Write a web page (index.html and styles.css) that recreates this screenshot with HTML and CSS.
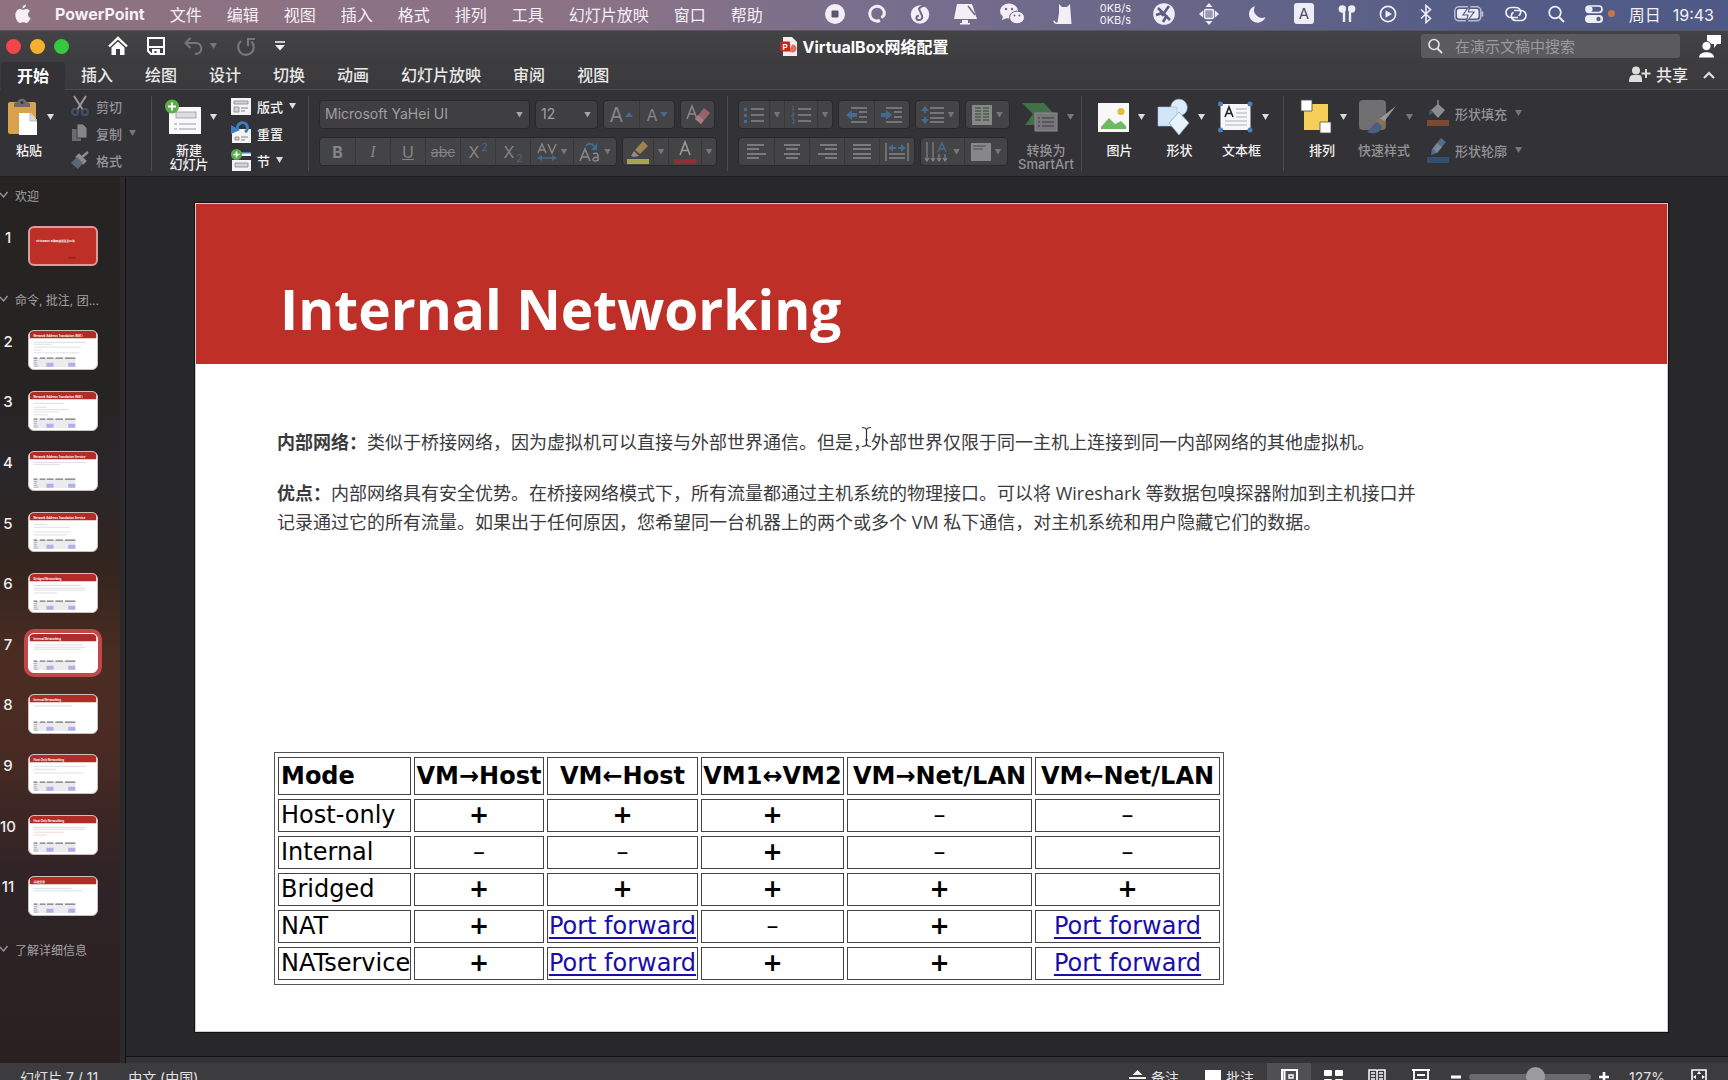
FILE: index.html
```html
<!DOCTYPE html>
<html lang="zh-CN">
<head>
<meta charset="utf-8">
<title>VirtualBox网络配置</title>
<link rel="stylesheet" href="styles.css">
</head>
<body>
<svg class="defs" width="0" height="0" aria-hidden="true">
  <symbol id="mini-grid" viewBox="0 0 70 40">
    <path d="M4 28.500h44v9.500H4z" fill="#ecebee"/>
    <path d="M4 28.500h4M10.500 28.500h6M18 28.500h7M27 28.500h8M37 28.500H48" stroke="#77757a" stroke-width="1.200"/>
    <path d="M4 31h4M4 33h3.500M4 35h4M4 37h5" stroke="#a5a3a8" stroke-width=".8"/>
    <path d="M17.500 33.500h7.500v4h-7.500zM40.500 33.500H48v4h-7.500z" fill="#b4aeea"/>
  </symbol>
</svg>

<header class="menubar">
  <nav class="menus" aria-label="菜单栏">
    <button aria-label="Apple"><svg width="16" height="20" viewBox="0 0 16 20"><path fill="#f6eef2" d="M11 .5c.1 2-1.700 3.900-3.600 3.900C7.200 2.500 9 .700 11 .5zM11.300 5c1.500 0 2.900.8 3.700 2-3 1.800-2.500 5.900.6 7.100-.9 2.400-2.400 4.900-4.200 4.900-1.200 0-1.700-.7-3.200-.7s-2 .7-3.200.7C2.900 19 .4 14.900.4 11.200.4 7.400 2.600 5 5 5c1.400 0 2.400.8 3.300.8C9.100 5.800 10 5 11.300 5z"/></svg></button>
    <button class="app">PowerPoint</button>
    <button>文件</button><button>编辑</button><button>视图</button><button>插入</button><button>格式</button><button>排列</button><button>工具</button><button>幻灯片放映</button><button>窗口</button><button>帮助</button>
  </nav>
  <div class="tray">
    <svg width="22" height="20" viewBox="0 0 20 20"><circle cx="10" cy="10" r="10" fill="#f4eff7"/><rect x="6.500" y="6.500" width="7" height="7" rx="1" fill="#5d5570"/></svg>
    <svg width="22" height="20" viewBox="0 0 18 20"><path d="M12 16.500A7.400 7.400 0 1 1 16.300 8c.5 3-1 4.500-3 5.500" fill="none" stroke="#f4eff7" stroke-width="3"/></svg>
    <svg width="24" height="20" viewBox="0 0 18 20"><circle cx="9" cy="10.500" r="9.200" fill="#f4eff7"/><path d="M14 1.500c-3 1-5.500 1-6 3.500l3 6.500c1 3-1.500 5-3.500 4.500-3-.5-2.800-4 .5-4.500" fill="none" stroke="#716886" stroke-width="2"/></svg>
    <svg width="26" height="22" viewBox="0 0 24 22"><path d="M4 1h15l5 15H1z" fill="#f4eff7"/><path d="M15 3l7 9" stroke="#6b6585" stroke-width="1.500"/><path d="M9 17h6v3h2v1.500H7V20h2z" fill="#f4eff7"/></svg>
    <svg width="28" height="22" viewBox="0 0 24 22"><ellipse cx="9" cy="8" rx="9" ry="7.500" fill="#f4eff7"/><path d="M3 13l-1 4 5-2z" fill="#f4eff7"/><ellipse cx="17" cy="14.500" rx="7.500" ry="6.300" fill="#f4eff7" stroke="#6b6585"/><g fill="#6b6585"><circle cx="6" cy="6" r="1.200"/><circle cx="12" cy="6" r="1.200"/><circle cx="14.500" cy="12.500" r="1"/><circle cx="19.500" cy="12.500" r="1"/></g></svg>
    <svg width="34" height="22" viewBox="0 0 20 22"><path d="M6 1l3 3h5l3-3 1.500 20H5c-3 0-5-1-4.500-3.500l1.500.5c0 1 1 1.500 2.500 1.500L6 10z" fill="#f4eff7"/></svg>
    <span class="net">0KB/s<br>0KB/s</span>
    <svg width="24" height="22" viewBox="0 0 22 22"><circle cx="11" cy="11" r="10.800" fill="#eeedf6"/><path d="M5 5l12 12M16 3L9 13M3 12l6-2M10 19l4-7" stroke="#5d5c80" stroke-width="2.600" fill="none"/></svg>
    <svg width="26" height="22" viewBox="0 0 20 22"><rect x="5.500" y="6.500" width="9" height="9" rx="1.500" fill="#9a98b8" stroke="#eeedf6" stroke-width="1.500"/><path d="M10 0l3.500 4h-7zM10 22l3.500-4h-7zM0 11l4-3.500v7zM20 11l-4-3.500v7z" fill="#eeedf6"/></svg>
    <svg width="30" height="20" viewBox="0 0 22 20"><path d="M9 2a8 8 0 0 0 10.500 11A8.500 8.500 0 1 1 9 2z" fill="#eeedf6"/></svg>
    <svg width="24" height="21" viewBox="0 0 20 21"><rect width="20" height="21" rx="3" fill="#eeedf6"/><text x="10" y="16" text-anchor="middle" class="keycap">A</text></svg>
    <svg width="22" height="20" viewBox="0 0 18 20"><path d="M6 2v16M12 2v16" stroke="#eeedf6" stroke-width="2.400"/><circle cx="4.300" cy="5" r="3.700" fill="#eeedf6"/><circle cx="13.700" cy="5" r="3.700" fill="#eeedf6"/></svg>
    <svg width="20" height="18" viewBox="0 0 18 18"><circle cx="9" cy="9" r="7.600" fill="none" stroke="#eeedf6" stroke-width="1.700"/><path d="M6.500 5.200L13 9l-6.500 3.800z" fill="#eeedf6"/></svg>
    <svg width="16" height="20" viewBox="0 0 12 20"><path d="M1 5.500l9.500 9L6 18.500v-17l4.500 4L1 14.500" fill="none" stroke="#eeedf6" stroke-width="1.600"/></svg>
    <svg width="30" height="18" viewBox="0 0 30 18"><rect x=".8" y="1.800" width="26" height="14" rx="4" fill="none" stroke="#b9bbd3" stroke-width="1.500"/><rect x="3" y="4" width="21.500" height="9.600" rx="2" fill="#eeedf6"/><path d="M28.300 6.500v5" stroke="#b9bbd3" stroke-width="2"/><path d="M16 0l-7 10h5l-2 8 8-11h-5.500z" fill="#eeedf6" stroke="#565d88" stroke-width="1.200"/></svg>
    <svg width="24" height="18" viewBox="0 0 22 18"><path d="M13 12.500H6a5 5 0 0 1 0-10h5.500a4.500 4.500 0 0 1 2 8.300M9 5.500h7a5 5 0 0 1 0 10h-5.500a4.500 4.500 0 0 1-2-8.300" fill="none" stroke="#eeedf6" stroke-width="1.700"/></svg>
    <svg width="17" height="18" viewBox="0 0 17 18"><circle cx="7" cy="7.500" r="5.800" fill="none" stroke="#eeedf6" stroke-width="1.800"/><path d="M11 12l5 5" stroke="#eeedf6" stroke-width="2"/></svg>
    <span class="cc"><svg width="18" height="18" viewBox="0 0 18 18"><rect x="1" y="1" width="16" height="6.500" rx="3.200" fill="none" stroke="#eeedf6" stroke-width="1.700"/><circle cx="4.500" cy="4.200" r="3" fill="#eeedf6"/><rect y="10" width="18" height="8" rx="4" fill="#eeedf6"/><circle cx="13.500" cy="14" r="2.200" fill="#565d88"/></svg><i class="rec"></i></span>
    <span class="clock"><span>周日</span><span>19:43</span></span>
  </div>
</header>

<header class="titlebar">
  <div class="quick">
    <span class="lights"><button class="close" aria-label="关闭"></button><button class="min" aria-label="最小化"></button><button class="max" aria-label="缩放"></button></span>
    <button aria-label="主页"><svg width="20" height="20" viewBox="0 0 20 20"><path d="M1 10.500L10 2l9 8.500" fill="none" stroke="#fff" stroke-width="2.400"/><path d="M3.500 11.500L10 5.500l6.500 6V19H12v-6H8v6H3.500z" fill="#fff"/></svg></button>
    <button aria-label="保存"><svg width="18" height="18" viewBox="0 0 18 18"><path d="M1 1h16v16H4l-3-3z" fill="none" stroke="#fff" stroke-width="2"/><path d="M2 9h14v2H2zM5 12h8v5H9.500v-3h-2v3H5z" fill="#fff"/></svg></button>
    <button class="undo" aria-label="撤销"><svg width="19" height="18" viewBox="0 0 19 18"><path d="M6.500 1L1.500 6l5 5M2 6h10a5.500 5.500 0 0 1 2 10.500l-3 .5" fill="none" stroke="#77777a" stroke-width="2"/></svg><i class="caret dim"></i></button>
    <button aria-label="重复"><svg width="20" height="19" viewBox="0 0 20 19"><path d="M5 4a7.800 7.800 0 1 0 10.500.5M12 9V2M11 2h8" fill="none" stroke="#77777a" stroke-width="2.200"/></svg></button>
    <button aria-label="自定义"><svg width="10" height="10" viewBox="0 0 10 10"><path d="M0 1h10" stroke="#eee" stroke-width="1.600"/><path d="M0 4h10L5 9.500z" fill="#eee"/></svg></button>
  </div>
  <h1 class="doc"><svg width="17" height="19" viewBox="0 0 17 19"><path d="M3 0h9l5 5v14H3z" fill="#f3efee"/><path d="M12 7.500a4 4 0 1 1-3 6z" fill="#e0705c"/><rect y="4.500" width="10" height="10" rx="1" fill="#c5261b"/><text x="5" y="12.500" text-anchor="middle" class="ppt">P</text></svg>VirtualBox网络配置</h1>
  <div class="right">
    <label class="search"><svg width="15" height="16" viewBox="0 0 15 16"><circle cx="6" cy="6.500" r="5" fill="none" stroke="#e6e6e6" stroke-width="1.600"/><path d="M9.500 10.500l4.500 4.500" stroke="#e6e6e6" stroke-width="1.800"/></svg><input type="search" placeholder="在演示文稿中搜索" aria-label="在演示文稿中搜索"></label>
    <button aria-label="反馈"><svg width="22" height="23" viewBox="0 0 22 23"><path d="M8 0h14v9h-4l-3 4V9H8z" fill="#fff"/><circle cx="7.500" cy="11" r="4.600" fill="#fff" stroke="#404042"/><path d="M0 22.500c0-7 15-7 15 0z" fill="#fff"/></svg></button>
  </div>
</header>

<nav class="tabs" aria-label="功能区">
  <button class="on">开始</button><button>插入</button><button>绘图</button><button>设计</button><button>切换</button><button>动画</button><button>幻灯片放映</button><button>审阅</button><button>视图</button>
  <button class="share"><svg width="22" height="16" viewBox="0 0 22 16"><circle cx="7" cy="4.500" r="4" fill="#ddd"/><path d="M0 16c0-4 1-7 4-7h6c3 0 3 3 3 7z" fill="#ddd"/><path d="M17 3v9M12.500 7.500h9" stroke="#ddd" stroke-width="2"/></svg>共享</button>
  <button class="fold" aria-label="折叠功能区"><svg width="12" height="8" viewBox="0 0 12 8"><path d="M1 7l5-5 5 5" fill="none" stroke="#e0e0e0" stroke-width="2.200"/></svg></button>
</nav>

<section class="ribbon" aria-label="开始">
  <div class="group clip">
    <button class="big"><span class="pic"><svg width="30" height="36" viewBox="0 0 30 36"><rect y="3" width="28" height="32" rx="2" fill="#d9a24c"/><path d="M6 8V5c0-2 3-1 4-3 1-3 7-3 8 0 1 2 4 1 4 3v3z" fill="#6d6a68"/><circle cx="14" cy="3.500" r="1.500" fill="#333"/><path d="M11 14h12l6 7v15H11z" fill="#fff"/><path d="M22 14v8h7z" fill="#ddd" stroke="#999" stroke-width=".6"/></svg><i class="caret"></i></span>粘贴</button>
    <div class="stack dimmed">
      <button><svg width="18" height="20" viewBox="0 0 18 20"><path d="M3 0l9 14M15 0L6 14" stroke="#98989b" stroke-width="2"/><circle cx="4" cy="16" r="3" fill="none" stroke="#43536d" stroke-width="1.800"/><circle cx="14" cy="16" r="3" fill="none" stroke="#43536d" stroke-width="1.800"/></svg>剪切</button>
      <button><svg width="18" height="18" viewBox="0 0 18 18"><path d="M1 5h9v12H1z" fill="#6c6c6f"/><path d="M6 0h6l4 4v10H6z" fill="#858588" stroke="#333236" stroke-width=".8"/></svg>复制<i class="caret dim"></i></button>
      <button><svg width="18" height="18" viewBox="0 0 18 18"><path d="M17 1l-6 5M8 4l6 6-2 2-6-6z" stroke="#8d8d90" stroke-width="2.500" fill="#8d8d90"/><path d="M6 6l6 6-5 6-7-6z" fill="#5e6774"/></svg>格式</button>
    </div>
  </div>
  <div class="group slides">
    <button class="big"><span class="pic"><svg width="36" height="36" viewBox="0 0 36 36"><rect x="4" y="8" width="32" height="27" fill="#fafafa"/><rect x="11" y="13" width="20" height="6" fill="#dcdde2" stroke="#9a9ca4" stroke-width=".8"/><path d="M9 25h3M14 25h17M9 30h3M14 30h17" stroke="#9a9ca4" stroke-width="1.200"/><circle cx="7" cy="7.500" r="7" fill="#5cae4d"/><path d="M7 3.500v8M3 7.500h8" stroke="#fff" stroke-width="2"/></svg><i class="caret"></i></span>新建<br>幻灯片</button>
    <div class="stack">
      <button><svg width="20" height="17" viewBox="0 0 20 17"><path d="M0 0h20v17H0z" fill="#f4f4f4"/><path d="M3 3h14v3H3zM3 9h5v5H3z" fill="#d0d2d8" stroke="#888" stroke-width=".8"/><path d="M10 10h7M10 13h4" stroke="#888"/></svg>版式<i class="caret"></i></button>
      <button><svg width="20" height="20" viewBox="0 0 20 20"><path d="M1 6h19v14H1z" fill="#f4f4f4"/><path d="M4 14h4v3H4z" fill="#d0d2d8" stroke="#888" stroke-width=".8"/><path d="M10 14h7M10 17h4" stroke="#888"/><path d="M7 7a5 5 0 1 1 7 2" fill="none" stroke="#3e7cc4" stroke-width="3"/><path d="M0 2l9 5-9 4z" fill="#3e7cc4"/></svg>重置</button>
      <button><svg width="20" height="22" viewBox="0 0 20 22"><path d="M9 3h11v4H9z" fill="#f4f4f4"/><path d="M9 3h11v1.500H9z" fill="#3e7cc4"/><path d="M1 11h19v11H1z" fill="#f4f4f4"/><path d="M4 14h13v4H4z" fill="#d0d2d8" stroke="#888" stroke-width=".8"/><circle cx="5.500" cy="5.500" r="5.500" fill="#5cae4d"/><path d="M5.500 2.500v6M2.500 5.500h6" stroke="#fff" stroke-width="1.500"/></svg>节<i class="caret"></i></button>
    </div>
  </div>
  <div class="group fonts">
    <div class="line">
      <label class="combo face"><select aria-label="字体"><option>Microsoft YaHei UI</option></select><i class="caret"></i></label>
      <label class="combo size"><select aria-label="字号"><option>12</option></select><i class="caret"></i></label>
      <div class="bar"><button class="w35 t20">A<svg width="8" height="5" viewBox="0 0 8 5"><path d="M0 5h8L4 0z" fill="#456a92"/></svg></button><button class="w35 t16">A<svg width="8" height="5" viewBox="0 0 8 5"><path d="M0 0h8L4 5z" fill="#456a92"/></svg></button></div>
      <div class="bar"><button class="w33" aria-label="清除格式"><svg width="24" height="24" viewBox="0 0 24 24"><path d="M1 16L6 3l5 13M3 11h6" fill="none" stroke="#89898b" stroke-width="1.500"/><path d="M9 16l9-11 6 5-9 11z" fill="#96626c"/><path d="M9 16l3-4 6 5-3 4z" fill="#a97a83"/></svg></button></div>
    </div>
    <div class="line">
      <div class="bar">
        <button class="w35 t16 bold">B</button><button class="w35 t16 ital">I</button><button class="w35 t16 under">U</button><button class="w35 t14 strike">abc</button><button class="w35 t16">X<sup>2</sup></button><button class="w35 t16">X<sub>2</sub></button>
        <button class="w43" aria-label="字符间距"><svg width="20" height="18" viewBox="0 0 20 18"><path d="M1 10L5 1l4 9M2.500 7h5M11 1l4 9 4-9" fill="none" stroke="#89898b" stroke-width="1.400"/><path d="M3 15h14" stroke="#456a92" stroke-width="1.500"/><path d="M0 15l5-3v6zM20 15l-5-3v6z" fill="#456a92"/></svg><i class="caret dim"></i></button>
        <button class="w43" aria-label="更改大小写"><svg width="21" height="22" viewBox="0 0 21 22"><path d="M1 20L6 8l5 12M3 16h6" fill="none" stroke="#89898b" stroke-width="1.500"/><path d="M14 13c2-1.500 5-1 5 1.500V20M19 16c-6 0-6 4-3 4 2 0 3-1 3-2" fill="none" stroke="#89898b" stroke-width="1.500"/><path d="M7 5c2-3 6-3 8 0" fill="none" stroke="#456a92" stroke-width="2"/><path d="M18 2v7h-6z" fill="#456a92"/></svg><i class="caret dim"></i></button>
      </div>
      <div class="bar">
        <button class="w30" aria-label="突出显示"><svg width="22" height="24" viewBox="0 0 22 24"><path d="M8 10l8-9 5 5-8 8z" fill="#a08355"/><path d="M7 11l5 5-5 1-3-1z" fill="#8d8d8f"/><rect y="19" width="22" height="5" fill="#a3a64e"/></svg></button><button class="w15"><i class="caret dim"></i></button>
        <button class="w33" aria-label="字体颜色"><svg width="22" height="24" viewBox="0 0 22 24"><path d="M6 15l5-13 5 13M8 10.500h6" fill="none" stroke="#99999b" stroke-width="1.600"/><rect y="19" width="22" height="5" fill="#8d2f35"/></svg></button><button class="w15"><i class="caret dim"></i></button>
      </div>
    </div>
  </div>
  <div class="group para">
    <div class="lines">
      <div class="line">
        <div class="bar">
          <button class="w30" aria-label="项目符号"><svg width="20" height="18" viewBox="0 0 20 18"><path d="M7 3h13M7 9h13M7 15h13" stroke="#858587" stroke-width="1.300"/><path d="M0 2h3v3H0zM0 8h3v3H0zM0 14h3v3H0z" fill="#456a92"/></svg></button><button class="w15"><i class="caret dim"></i></button>
          <button class="w33" aria-label="编号"><svg width="20" height="18" viewBox="0 0 20 18"><path d="M7 3h13M7 9h13M7 15h13" stroke="#858587" stroke-width="1.300"/><path d="M2 0v5M1 7h2v2H1v2h2M1 13h2v4H1" fill="none" stroke="#456a92"/></svg></button><button class="w15"><i class="caret dim"></i></button>
        </div>
        <div class="bar">
          <button class="w35" aria-label="减少缩进"><svg width="22" height="16" viewBox="0 0 22 16"><path d="M5 1h16M13 5h8M13 10h8M5 15h16" stroke="#858587" stroke-width="1.300"/><path d="M0 8l6-5v3h5v4H6v3z" fill="#456a92"/></svg></button>
          <button class="w35" aria-label="增加缩进"><svg width="22" height="16" viewBox="0 0 22 16"><path d="M5 1h16M13 5h8M13 10h8M5 15h16" stroke="#858587" stroke-width="1.300"/><path d="M11 8L5 3v3H0v4h5v3z" fill="#456a92"/></svg></button>
        </div>
        <div class="bar"><button class="w43" aria-label="行距"><svg width="23" height="18" viewBox="0 0 23 18"><path d="M9 2h14M9 7h14M9 12h14M9 16h14" stroke="#858587" stroke-width="1.300"/><path d="M4 0l4 5H5v2H3V5H0zM4 18l4-5H5v-2H3v2H0z" fill="#456a92"/></svg><i class="caret dim"></i></button></div>
        <div class="bar"><button class="w43" aria-label="分栏"><svg width="20" height="20" viewBox="0 0 20 20"><rect width="20" height="20" fill="#87878a"/><path d="M3 3h6M3 6h6M3 9h6M3 12h6M3 15h6M11 3h6M11 6h6M11 9h6M11 12h6M11 15h6" stroke="#4c5f46" stroke-width="1.400"/></svg><i class="caret dim"></i></button></div>
      </div>
      <div class="line">
        <div class="bar">
          <button class="w35" aria-label="左对齐"><svg width="20" height="16" viewBox="0 0 20 16"><path d="M0 1h17M0 5h12M0 10h19M0 14h12" stroke="#8d8d90" stroke-width="1.300"/></svg></button>
          <button class="w35" aria-label="居中"><svg width="20" height="16" viewBox="0 0 20 16"><path d="M2 1h16M4 5h12M2 10h16M4 14h12" stroke="#8d8d90" stroke-width="1.300"/></svg></button>
          <button class="w35" aria-label="右对齐"><svg width="20" height="16" viewBox="0 0 20 16"><path d="M3 1h17M8 5h12M1 10h19M8 14h12" stroke="#8d8d90" stroke-width="1.300"/></svg></button>
          <button class="w35" aria-label="两端对齐"><svg width="20" height="16" viewBox="0 0 20 16"><path d="M1 1h18M1 5h18M1 10h18M1 14h18" stroke="#8d8d90" stroke-width="1.300"/></svg></button>
          <button class="w35" aria-label="分散对齐"><svg width="24" height="18" viewBox="0 0 24 18"><path d="M1 0v18M23 0v18M4 11h16M4 15h16" stroke="#858587" stroke-width="1.300"/><path d="M3 5l5-4v3h3v2H8v3zM21 5l-5-4v3h-3v2h3v3z" fill="#456a92"/></svg></button>
        </div>
        <div class="bar">
          <button class="w43" aria-label="文字方向"><svg width="24" height="20" viewBox="0 0 24 20"><path d="M2 0v19M8 0v19M14 12v7M20 12v7M0 16l2 3 2-3M6 16l2 3 2-3M12 16l2 3 2-3M18 16l2 3 2-3" fill="none" stroke="#858587" stroke-width="1.200"/><path d="M13 10l4-9 4 9M15 7h4" fill="none" stroke="#456a92" stroke-width="1.500"/></svg><i class="caret dim"></i></button>
          <button class="w43" aria-label="对齐文本"><svg width="20" height="18" viewBox="0 0 20 18"><rect width="20" height="18" fill="#87878a"/><path d="M2 3h13M2 6h10" stroke="#4a4a4c" stroke-width="1.200"/></svg><i class="caret dim"></i></button>
        </div>
      </div>
    </div>
    <button class="big dimmed"><span class="pic"><svg width="36" height="32" viewBox="0 0 36 32"><path d="M0 2h22l10 11-10 11H3l8-11z" fill="#427048"/><rect x="13" y="12" width="22" height="18" fill="#77777a" stroke="#8b8b8d"/><path d="M16 17h2M20 17h12M16 21h2M20 21h12M16 25h2M20 25h12" stroke="#3c3b3e"/></svg><i class="caret dim"></i></span>转换为<br>SmartArt</button>
  </div>
  <div class="group insert">
    <button class="big"><span class="pic"><svg width="31" height="29" viewBox="0 0 31 29"><path d="M0 0h31v29H0z" fill="#f8f8f8"/><circle cx="23" cy="8.500" r="3.500" fill="#e6b742"/><path d="M3 24l8-9 6 6 6-3 5 5v3H3z" fill="#6dbb61"/></svg><i class="caret"></i></span>图片</button>
    <button class="big"><span class="pic"><svg width="31" height="36" viewBox="0 0 31 36"><circle cx="21" cy="8.500" r="8.300" fill="#dcecfa" stroke="#9cbfe0" stroke-width=".6"/><path d="M0 8h19v19H0z" fill="#d3e6f7" stroke="#9cbfe0" stroke-width=".6"/><path d="M21 13l10 11-10 12-10-12z" fill="#e8f3fc" stroke="#7fa8d2" stroke-width=".8"/></svg><i class="caret"></i></span>形状</button>
    <button class="big"><span class="pic"><svg width="35" height="32" viewBox="0 0 35 32"><path d="M2.500 3h30v26h-30z" fill="#f6f7fa"/><path d="M7 16l4-10 4 10M8.500 12.500h5" fill="none" stroke="#222" stroke-width="1.600"/><path d="M18 8h11M18 12h11M18 16h11M7 20h22M7 24h22" stroke="#b0b0b4" stroke-width="1.200"/><g fill="#4f7db6"><circle cx="2.500" cy="3" r="2.500"/><circle cx="32" cy="3" r="2.500"/><circle cx="2.500" cy="29" r="2.500"/><circle cx="32" cy="29" r="2.500"/></g></svg><i class="caret"></i></span>文本框</button>
  </div>
  <div class="group draw">
    <button class="big"><span class="pic"><svg width="30" height="34" viewBox="0 0 30 34"><path d="M3 4h24v26H3z" fill="#f5cf58"/><path d="M0 0h11v11H0zM19 22h11v11H19z" fill="#fff" stroke="#4b4b4b" stroke-width=".8"/></svg><i class="caret"></i></span>排列</button>
    <button class="big dimmed"><span class="pic"><svg width="38" height="34" viewBox="0 0 38 34"><rect width="27" height="30" rx="4" fill="#6f6f71"/><path d="M37 6l-13 17-5-3z" fill="#98989a"/><circle cx="21" cy="24" r="5" fill="#8d7152"/><path d="M19 22c-6 2-6 6-11 10 7 3 13 1 15-5z" fill="#48607f"/></svg><i class="caret dim"></i></span>快速样式</button>
    <div class="pair dimmed">
      <button><svg width="22" height="26" viewBox="0 0 22 26"><path d="M4 10l7-6 7 6-7 8z" fill="#8a8c90"/><path d="M11 0v8" stroke="#8a8c90" stroke-width="1.500"/><path d="M3 9l-1 6 4-2z" fill="#3e6086"/><rect y="20" width="22" height="6" fill="#7c4a35"/></svg>形状填充<i class="caret dim"></i></button>
      <button><svg width="22" height="26" viewBox="0 0 22 26"><path d="M14 1l5 4-9 11-6 2 1-6z" fill="#4f6d8e"/><path d="M10 6l5 4-5 6-4-4z" fill="#7b8896"/><rect y="20" width="22" height="6" fill="#33506e"/></svg>形状轮廓<i class="caret dim"></i></button>
    </div>
  </div>
</section>

<main class="work">
  <aside class="panel" aria-label="幻灯片">
    <button class="sect"><svg width="8" height="6" viewBox="0 0 8 6"><path d="M0 1l3.500 4L7.500 0" fill="none" stroke="#97959a" stroke-width="1.400"/></svg>欢迎</button>
    <ol class="thumbs one">
      <li><span>1</span><svg class="thumb red" viewBox="0 0 70 40"><text x="5" y="15" class="mt">VirtualBox 五种网络配置及区别</text><path d="M41 33h8" stroke="#8c231d" stroke-width="1.500"/></svg></li>
    </ol>
    <button class="sect"><svg width="8" height="6" viewBox="0 0 8 6"><path d="M0 1l3.500 4L7.500 0" fill="none" stroke="#97959a" stroke-width="1.400"/></svg>命令, 批注, 团...</button>
    <ol class="thumbs ten">
      <li><span>2</span><svg class="thumb" viewBox="0 0 70 40"><path d="M0 0h70v7.500H0z" fill="#b12c26"/><text x="4" y="6" class="mt">Network Address Translation (NAT)</text><path d="M4 12h55M4 14h20M4 17h50M4 20h8M4 23h48" class="ml"/><use href="#mini-grid"/></svg></li>
      <li><span>3</span><svg class="thumb" viewBox="0 0 70 40"><path d="M0 0h70v7.500H0z" fill="#b12c26"/><text x="4" y="6" class="mt">Network Address Translation (NAT)</text><path d="M4 12h32M4 16h14M4 18.500h37M4 21h27M4 24h15" class="ml"/><use href="#mini-grid"/></svg></li>
      <li><span>4</span><svg class="thumb" viewBox="0 0 70 40"><path d="M0 0h70v7.500H0z" fill="#b12c26"/><text x="4" y="6" class="mt">Network Address Translation Service</text><path d="M4 11h55M4 13h28" class="ml"/><use href="#mini-grid"/></svg></li>
      <li><span>5</span><svg class="thumb" viewBox="0 0 70 40"><path d="M0 0h70v7.500H0z" fill="#b12c26"/><text x="4" y="6" class="mt">Network Address Translation Service</text><path d="M4 12h14M4 15h38M4 20h39M4 23h35" class="ml"/><use href="#mini-grid"/></svg></li>
      <li><span>6</span><svg class="thumb" viewBox="0 0 70 40"><path d="M0 0h70v7.500H0z" fill="#b12c26"/><text x="4" y="6" class="mt">Bridged Networking</text><path d="M4 12h50M4 15h55M4 17h54M4 20h25" class="ml"/><use href="#mini-grid"/></svg></li>
      <li class="on"><span>7</span><svg class="thumb" viewBox="0 0 70 40"><path d="M0 0h70v7.500H0z" fill="#b12c26"/><text x="4" y="6" class="mt">Internal Networking</text><path d="M4 11.500h52M4 14h55M4 16h50" class="ml"/><use href="#mini-grid"/></svg></li>
      <li><span>8</span><svg class="thumb" viewBox="0 0 70 40"><path d="M0 0h70v7.500H0z" fill="#b12c26"/><text x="4" y="6" class="mt">Internal Networking</text><path d="M4 11.500h41" class="ml"/><use href="#mini-grid"/></svg></li>
      <li><span>9</span><svg class="thumb" viewBox="0 0 70 40"><path d="M0 0h70v7.500H0z" fill="#b12c26"/><text x="4" y="6" class="mt">Host Only Networking</text><path d="M4 12h55M4 15h24M4 19h53" class="ml"/><use href="#mini-grid"/></svg></li>
      <li><span>10</span><svg class="thumb" viewBox="0 0 70 40"><path d="M0 0h70v7.500H0z" fill="#b12c26"/><text x="4" y="6" class="mt">Host Only Networking</text><path d="M4 12h55M4 14h54" class="ml"/><path d="M4 17h32M4 20h14" class="ml rose"/><use href="#mini-grid"/></svg></li>
      <li><span>11</span><svg class="thumb" viewBox="0 0 70 40"><path d="M0 0h70v7.500H0z" fill="#b12c26"/><text x="4" y="6" class="mt">问题反馈</text><path d="M4 12h40M4 14.500h52" class="ml teal"/><use href="#mini-grid"/></svg></li>
    </ol>
    <button class="sect"><svg width="8" height="6" viewBox="0 0 8 6"><path d="M0 1l3.500 4L7.500 0" fill="none" stroke="#97959a" stroke-width="1.400"/></svg>了解详细信息</button>
  </aside>

  <section class="canvas">
    <article class="slide">
      <h2>Internal Networking</h2>
      <div class="content">
        <p><strong>内部网络：</strong>类似于桥接网络，因为虚拟机可以直接与外部世界通信。但是，外部世界仅限于同一主机上连接到同一内部网络的其他虚拟机。</p>
        <p><strong>优点：</strong>内部网络具有安全优势。在桥接网络模式下，所有流量都通过主机系统的物理接口。可以将 Wireshark 等数据包嗅探器附加到主机接口并记录通过它的所有流量。如果出于任何原因，您希望同一台机器上的两个或多个 VM 私下通信，对主机系统和用户隐藏它们的数据。</p>
        <table>
          <colgroup><col class="c1"><col class="c2"><col class="c3"><col class="c4"><col class="c5"><col class="c5"></colgroup>
          <thead><tr><th>Mode</th><th>VM→Host</th><th>VM←Host</th><th>VM1↔VM2</th><th>VM→Net/LAN</th><th>VM←Net/LAN</th></tr></thead>
          <tbody>
            <tr><td>Host-only</td><td><b>+</b></td><td><b>+</b></td><td><b>+</b></td><td>–</td><td>–</td></tr>
            <tr><td>Internal</td><td>–</td><td>–</td><td><b>+</b></td><td>–</td><td>–</td></tr>
            <tr><td>Bridged</td><td><b>+</b></td><td><b>+</b></td><td><b>+</b></td><td><b>+</b></td><td><b>+</b></td></tr>
            <tr><td>NAT</td><td><b>+</b></td><td><a href="#">Port forward</a></td><td>–</td><td><b>+</b></td><td><a href="#">Port forward</a></td></tr>
            <tr><td>NATservice</td><td><b>+</b></td><td><a href="#">Port forward</a></td><td><b>+</b></td><td><b>+</b></td><td><a href="#">Port forward</a></td></tr>
          </tbody>
        </table>
      </div>
      <svg class="ibeam" width="9" height="20" viewBox="0 0 9 20"><path d="M0 .5c3 0 4.500 1 4.500 3v13c0 2-1.500 3-4.500 3M9 .5c-3 0-4.500 1-4.500 3v13c0 2 1.500 3 4.500 3M3 13h3" fill="none" stroke="#333" stroke-width="1.200"/></svg>
    </article>
  </section>
</main>

<footer class="status">
  <div class="status-row">
    <span>幻灯片 7 / 11</span><span class="lang">中文 (中国)</span>
    <div class="views">
      <button class="note"><svg width="17" height="14" viewBox="0 0 17 14"><path d="M8.500 0l5 5h-10z" fill="#f0f0f0"/><path d="M0 8h17M0 12h17" stroke="#f0f0f0" stroke-width="1.800"/></svg>备注</button>
      <button class="note"><svg width="16" height="15" viewBox="0 0 16 15"><path d="M0 0h16v12H9l-4 3v-3H0z" fill="#fff"/></svg>批注</button>
      <button class="view on" aria-label="普通视图"><svg width="17" height="16" viewBox="0 0 17 16"><path d="M1 1h15v14H1zM3.500 1v14" fill="none" stroke="#fff" stroke-width="2"/><path d="M8 6h4v3H8z" fill="none" stroke="#fff" stroke-width="1.400"/></svg></button>
      <button class="view" aria-label="幻灯片浏览"><svg width="19" height="15" viewBox="0 0 19 15"><g fill="#fff"><rect width="8" height="6" rx="1"/><rect x="11" width="8" height="6" rx="1"/><rect y="9" width="8" height="6" rx="1"/><rect x="11" y="9" width="8" height="6" rx="1"/></g></svg></button>
      <button class="view" aria-label="阅读视图"><svg width="18" height="16" viewBox="0 0 18 16"><path d="M1 1h7l1 1 1-1h7v13h-7l-1 1-1-1H1zM9 2v13M3 4h4M3 7h4M3 10h4M11 4h4M11 7h4M11 10h4" fill="none" stroke="#fff" stroke-width="1.500"/></svg></button>
      <button class="view" aria-label="幻灯片放映"><svg width="18" height="16" viewBox="0 0 18 16"><path d="M0 1h18M2 2v9h14V2M5 6h8" fill="none" stroke="#fff" stroke-width="1.800"/></svg></button>
      <button class="step" aria-label="缩小"><svg width="10" height="10" viewBox="0 0 10 10"><path d="M0 5h10" stroke="#fff" stroke-width="3"/></svg></button>
      <input type="range" min="0" max="100" value="55" aria-label="缩放">
      <button class="step" aria-label="放大"><svg width="10" height="10" viewBox="0 0 10 10"><path d="M0 5h10M5 0v10" stroke="#fff" stroke-width="2.600"/></svg></button>
      <span class="pct">127%</span>
      <button aria-label="适应窗口"><svg width="16" height="16" viewBox="0 0 16 16"><path d="M1 1h14v14H1z" fill="none" stroke="#fff" stroke-width="1.600"/><path d="M8 2l2 3H6zM8 14l2-3H6zM2 8l3-2v4zM14 8l-3-2v4z" fill="#fff"/></svg></button>
    </div>
  </div>
</footer>
</body>
</html>
```
FILE: styles.css
```css
* { box-sizing: border-box; }
body {
  margin: 0;
  height: 100vh;
  display: grid;
  grid-template-rows: 30px 32px 28px 87px minmax(0, 1fr) 17px;
  overflow: hidden;
  background: #28272a;
  color: #e8e8e8;
  font-family: Inter, "Noto Sans CJK SC", sans-serif;
  font-size: 16px;
}
.defs { position: absolute; }
button {
  margin: 0; padding: 0; border: 0;
  background: none; color: inherit; font: inherit;
  display: flex; align-items: center;
  white-space: nowrap;
}
svg { display: block; flex: none; overflow: visible; }

/* system menu bar */
.menubar {
  display: flex; justify-content: space-between; align-items: center;
  padding: 0 14px 3px 15px;
  background: linear-gradient(90deg, #8e7280 0%, #8a7286 35%, #776e8d 52%, #676688 68%, #555d87 85%, #4e5986 100%);
  color: #f6f0f5;
}
.menus { display: flex; align-items: center; gap: 25px; }
.menus button:first-child { margin-right: -1px; }
.app { font-weight: 700; }
.tray { display: flex; align-items: center; gap: 20px; }
.net { width: 32px; font-size: 11px; line-height: 12px; }
.keycap { font-size: 15px; fill: #4a4a66; }
.cc { display: flex; align-items: center; gap: 5px; }
.rec { width: 7px; height: 7px; border-radius: 50%; background: #c5793f; }
.clock { display: flex; align-items: baseline; gap: 12px; margin-left: -6px; }

/* window title bar */
.titlebar {
  display: grid; grid-template-columns: 1fr auto 1fr; align-items: center;
  border-top: 1px solid #59575b;
  background: linear-gradient(#434244, #3d3c3e);
  padding-bottom: 1px;
}
.quick { display: flex; align-items: center; gap: 19px; padding-left: 6px; }
.lights { display: flex; gap: 9px; margin-right: 20px; }
.lights button { width: 15px; height: 15px; border-radius: 50%; }
.close { background: #f2464b; }
.min { background: #f5b02e; }
.max { background: #35c940; }
.undo { gap: 7px; }
.doc { margin: 0; font-size: 16px; font-weight: 700; color: #fff; display: flex; align-items: center; gap: 6px; }
.ppt { font-size: 8px; font-weight: 700; fill: #fff; }
.right { display: flex; justify-content: flex-end; align-items: center; gap: 19px; padding-right: 7px; }
.search {
  width: 259px; height: 24px; padding-left: 7px; gap: 12px;
  display: flex; align-items: center;
  background: #5b5a5c; border-radius: 3px;
}
.search input { flex: 1; min-width: 0; padding: 0; border: 0; outline: 0; background: none; font: inherit; font-size: 15px; color: #fff; }
.search input::placeholder { color: #9c9b9d; opacity: 1; }

.caret { flex: none; width: 7px; height: 6px; background: #dcdcdc; clip-path: polygon(0 0, 100% 0, 50% 100%); }
.caret.dim { background: #77777a; }

/* ribbon tabs */
.tabs {
  display: flex; align-items: stretch;
  padding-left: 1px;
  background: linear-gradient(#3d3c3e, #3a393b);
  border-bottom: 1px solid #4b4a4d;
  font-weight: 500;
}
.tabs button { padding: 0 16px 3px; }
.tabs .on { background: #333236; color: #fff; font-weight: 700; border-radius: 4px 4px 0 0; margin-bottom: -1px; }
.tabs .share { margin-left: auto; padding: 0 0 4px; gap: 5px; }
.tabs .fold { padding: 0 13px 2px 15px; }

/* ribbon */
.ribbon { display: flex; background: #333236; font-size: 13px; font-weight: 500; color: #f2f2f2; border-bottom: 1px solid #1f1e20; }
.group { display: flex; padding-top: 5px; position: relative; }
.group + .group::before { content: ""; position: absolute; left: 0; top: 6px; bottom: 5px; width: 1px; background: #4a494c; }
.dimmed { color: #949396; }
.big { flex-direction: column; line-height: 14px; }
.pic { display: flex; align-items: center; gap: 9px; height: 44px; margin: 0 -4px 4px 0; }
.stack { display: flex; flex-direction: column; gap: 5px; }
.stack button { height: 22px; gap: 7px; }
.clip { width: 151px; padding-left: 8px; gap: 21px; }
.slides { width: 157px; padding-left: 14px; gap: 18px; }
.slides .stack button { gap: 6px; }
.fonts { width: 419px; padding: 10px 0 0 11px; flex-direction: column; gap: 8px; }
.para { width: 354px; padding-left: 11px; gap: 8px; }
.lines { display: flex; flex-direction: column; gap: 8px; padding-top: 5px; }
.insert { width: 202px; padding-left: 17px; gap: 17px; }
.draw { padding-left: 18px; gap: 15px; }
.line { display: flex; gap: 5px; }
.bar { display: flex; height: 29px; border: 1px solid #29282b; border-radius: 4px; background: #444346; overflow: hidden; }
.bar button { justify-content: center; gap: 4px; color: #858487; font-weight: 400; }
.bar button + button { border-left: 1px solid #38373a; }
.w15 { width: 15px; } .w30 { width: 30px; } .w33 { width: 33px; } .w35 { width: 35px; } .w43 { width: 43px; }
.t14 { font-size: 14px; } .t16 { font-size: 16px; } .t20 { font-size: 20px; }
.bar .t16, .bar .t20 { gap: 2px; }
.bar .bold { font-weight: 700; }
.ital { font-family: "Liberation Serif", serif; font-style: italic; }
.under { text-decoration: underline; }
.strike { text-decoration: line-through; }
sup, sub { font-size: 10px; line-height: 10px; color: #456a92; }
sup { align-self: flex-start; margin-top: 4px; }
sub { align-self: flex-end; margin-bottom: 2px; }
.combo { display: flex; align-items: center; height: 29px; padding-right: 6px; border: 1px solid #29282b; border-radius: 4px; background: #3f3e41; }
.combo .caret { background: #a5a4a6; }
.combo select { flex: 1; height: 100%; min-width: 0; appearance: none; border: 0; padding: 0 0 2px 5px; background: none; color: #a09fa1; font: inherit; font-size: 14px; font-weight: 400; }
.face { width: 211px; }
.size { width: 63px; }
.pair { display: flex; flex-direction: column; gap: 11px; padding: 5px 0 0 2px; }
.pair button { height: 26px; gap: 6px; }
.pair .caret { margin-left: 2px; }

/* work area */
.work { display: grid; grid-template-columns: 126px minmax(0, 1fr); min-height: 0; }
.panel {
  border-right: 1px solid #111012;
  background:
    linear-gradient(90deg, transparent 120px, #2b2a2d 120px),
    linear-gradient(#262422 0%, #262423 25%, #29272a 33%, #33251f 44%, #4a2c22 54%, #4a2b23 64%, #3b2624 72%, #2e2326 80%, #2a2021 100%);
  padding-top: 8px;
  min-height: 0; overflow: hidden;
}
.sect { height: 20px; gap: 7px; font-size: 12px; color: #a3a1a4; }
.thumbs { list-style: none; margin: 0; padding: 0; display: grid; grid-auto-rows: 1fr; }
.one { height: 60px; margin: 11px 0 13px; }
.ten { height: 606px; margin: 11px 0 13px; }
.thumbs li { display: flex; align-items: center; gap: 8px; }
.thumbs span { width: 16px; margin: 0 0 18px; display: flex; justify-content: center; color: #eee; font-size: 15px; font-weight: 500; }
.thumb { width: 70px; height: 40px; margin-left: 4px; border: 1px solid #cbbfbf; background: #fff; border-radius: 6px; overflow: hidden; }
.thumb.red { border: 2px solid #d99c98; background: #be2f28; }
.on .thumb { border-color: #fff; box-shadow: 0 0 0 4px #c3474a; }
.mt { font-size: 3px; font-weight: 700; fill: #fff; }
.ml { stroke: #dedce0; stroke-width: 1; fill: none; }
.rose { stroke: #eed3d3; }
.teal { stroke: #cfe3e4; }

.canvas { display: flex; padding: 26px 60px 25px 69px; border-bottom: 6px solid #333235; box-shadow: inset 0 -1px #141315; min-height: 0; }
.slide { flex: 1; display: flex; flex-direction: column; position: relative; background: #fff; border: 1px solid #d9c9c8; outline: 1px solid #121113; color: #3b3a3d; }
.slide h2 {
  margin: 0; height: 160px; padding: 57px 0 0 84px; flex: none;
  background: #be2f28; color: #fff;
  font: 700 55px/96px "Open Sans", "Noto Sans", sans-serif;
}
.content { flex: 1; display: flex; flex-direction: column; padding: 64px 0 46px 81px; }
.content p { margin: 0 0 22px; max-width: 1154px; font: 400 18px/29px "Open Sans", "Noto Sans CJK SC", sans-serif; }
.content table {
  margin: auto 0 0 -3px; width: 950px; table-layout: fixed;
  border: 1px solid #555; border-collapse: separate; border-spacing: 3px 4px;
  font: 400 24px/31px "DejaVu Sans", sans-serif; color: #000;
}
th, td { border: 1px solid #444; padding: 0; text-align: center; height: 33px; white-space: nowrap; }
th { height: 38px; }
th:first-child, td:first-child { text-align: left; padding-left: 2px; }
.c1 { width: 133px; } .c2 { width: 130px; } .c3 { width: 151px; } .c4 { width: 143px; } .c5 { width: 185px; }
.content a { color: #1a0dab; text-underline-offset: 3px; }
.ibeam { position: absolute; left: 666px; top: 223px; }

/* status bar, cut off by the bottom of the screen */
.status { overflow: hidden; background: #3c3b3e; font-size: 14px; color: #e2e2e2; }
.status-row { height: 28px; display: flex; align-items: center; padding-left: 20px; }
.lang { margin-left: 30px; }
.views { margin-left: auto; padding-right: 21px; display: flex; align-items: center; }
.note { gap: 5px; margin-right: 26px; }
.note + .view { margin-left: -13px; }
.view { width: 44px; height: 28px; justify-content: center; }
.view.on { background: #505052; }
.step { margin: 0 8px; }
.pct { width: 74px; padding-left: 12px; }
input[type=range] { appearance: none; width: 122px; height: 20px; margin: 0; background: none; }
input[type=range]::-webkit-slider-runnable-track { height: 6px; border-radius: 3px; background: #6a696c; }
input[type=range]::-webkit-slider-thumb { appearance: none; width: 19px; height: 19px; margin-top: -7px; border-radius: 50%; background: #9b9a9d; }
```
